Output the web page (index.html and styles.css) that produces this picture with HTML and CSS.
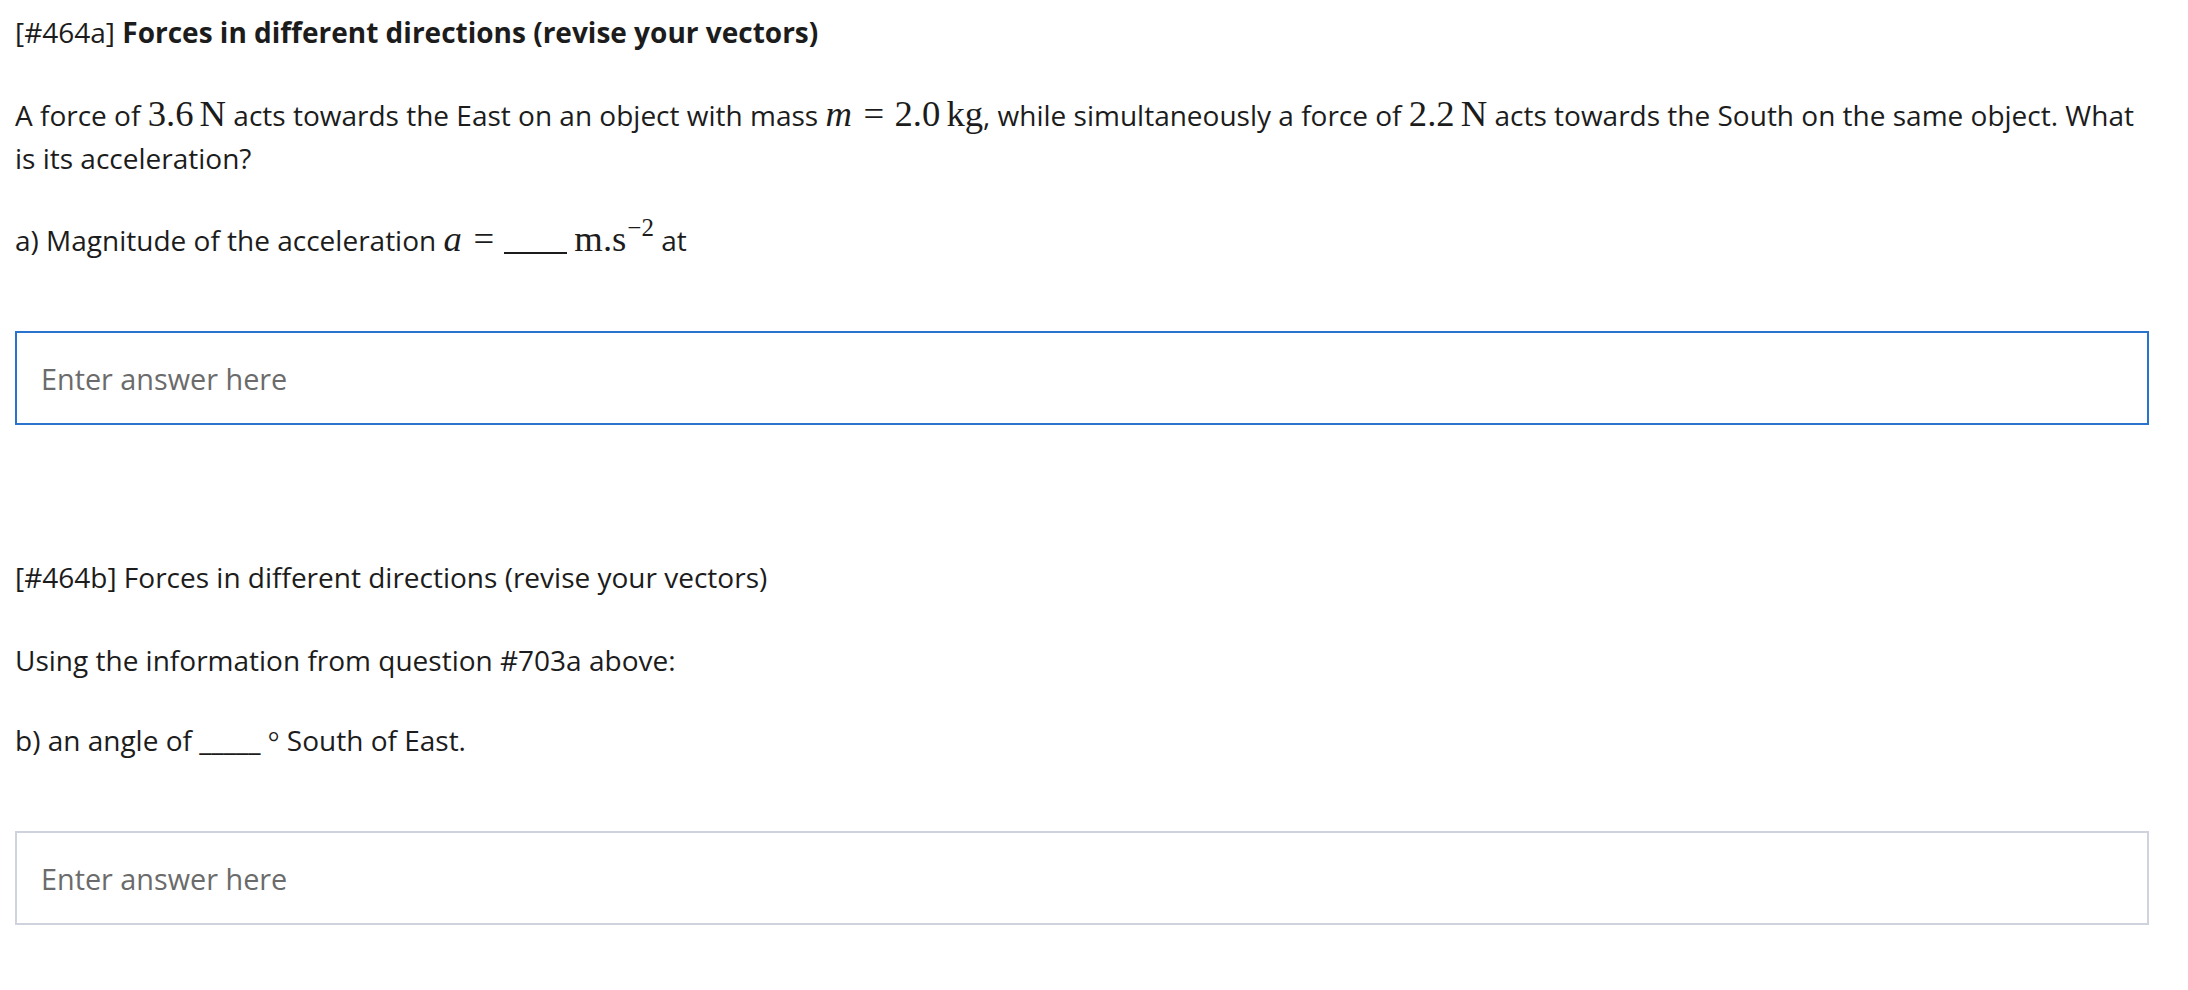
FILE: index.html
```html
<!DOCTYPE html>
<html lang="en">
<head>
<meta charset="utf-8">
<title>Forces in different directions</title>
<link rel="stylesheet" href="styles.css">
</head>
<body>
<main class="page">
  <section class="question">
    <h2 class="q-title">[#464a] <strong>Forces in different directions (revise your vectors)</strong></h2>
    <p class="q-text">A force of <span class="math">3.6<span class="unit">N</span></span> acts towards the East on an object with mass <span class="math"><span class="mi">m</span><span class="rel">=</span>2.0<span class="unit">kg</span></span>, while simultaneously a force of <span class="math">2.2<span class="unit">N</span></span> acts towards the South on the same object. What is its acceleration?</p>
    <p class="q-text">a) Magnitude of the acceleration <span class="math"><span class="mi">a</span><span class="rel">=</span><span class="blank"></span>m.s<span class="sup">&minus;2</span></span> at</p>
    <input class="answer focused" type="text" placeholder="Enter answer here">
  </section>
  <section class="question">
    <h2 class="q-title">[#464b] Forces in different directions (revise your vectors)</h2>
    <p class="q-text tight">Using the information from question #703a above:</p>
    <p class="q-text">b) an angle of _____ <span class="deg">&deg;</span> South of East.</p>
    <input class="answer" type="text" placeholder="Enter answer here">
  </section>
</main>
</body>
</html>
```
FILE: styles.css
```css
html, body {
  margin: 0;
  padding: 0;
  background: #ffffff;
}

body {
  font-family: "Open Sans", "Noto Sans", sans-serif;
  font-size: 28px;
  line-height: 43px;
  color: #1c1c1c;
}

.page {
  padding: 11px 39px 0 15px;
}

.question {
  display: flex;
  flex-direction: column;
}

.question + .question {
  margin-top: 131px;
}

.q-title {
  margin: 0 0 40px;
  font-size: 28px;
  font-weight: 400;
  line-height: 43px;
}

.q-title strong {
  font-weight: 700;
}

.q-text {
  margin: 0 0 39px;
}

.q-text.tight {
  margin-bottom: 37px;
}

.q-text + .answer {
  margin-top: 30px;
}

.math {
  font-family: "Liberation Serif", "DejaVu Serif", serif;
  font-size: 1.31em;
  line-height: 0;
  white-space: nowrap;
}

.unit {
  margin-left: 0.1667em;
}

.mi {
  font-style: italic;
  letter-spacing: 0.04em;
}

.rel {
  padding: 0 0.2778em;
}

.blank {
  display: inline-block;
  width: 63px;
  height: 2px;
  background: #1c1c1c;
  vertical-align: -3px;
  margin-right: 7px;
}

.sup {
  font-size: 0.68em;
  vertical-align: 0.62em;
  line-height: 0;
  padding-left: 1px;
}

.deg {
  font-family: "Liberation Serif", "DejaVu Serif", serif;
  font-size: 1.05em;
  vertical-align: -0.05em;
  line-height: 0;
}

.answer {
  box-sizing: border-box;
  display: block;
  width: 100%;
  height: 94px;
  margin: 0;
  padding: 0 24px;
  border: 2px solid #cfd3dd;
  border-radius: 0;
  background: #ffffff;
  font-family: "Open Sans", "Noto Sans", sans-serif;
  font-size: 28.8px;
  color: #1c1c1c;
  outline: none;
}

.answer::placeholder {
  color: #6b6b6b;
  opacity: 1;
}

.answer.focused {
  border-color: #2a73cc;
}
```
